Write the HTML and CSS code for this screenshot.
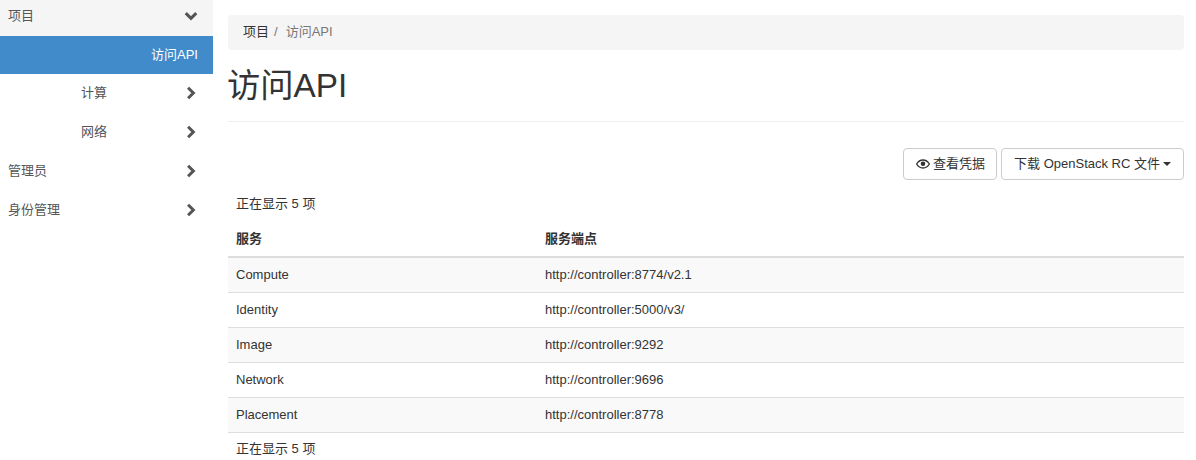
FILE: index.html
```html
<!DOCTYPE html>
<html lang="zh-CN">
<head>
    <meta charset="UTF-8">
    <title>访问API</title>
    <link rel="stylesheet" href="styles.css">
</head>
<body>
    <nav class="sidebar">
        <a class="nav-item nav-open">项目
            <svg class="chevron" viewBox="0 0 12 12"><path d="M1.5 3.5 6 8l4.500-4.500" /></svg>
        </a>
        <a class="nav-item nav-active">访问API</a>
        <a class="nav-item nav-sub">计算
            <svg class="chevron" viewBox="0 0 12 12"><path d="M3.500 1.500 8 6l-4.500 4.500" /></svg>
        </a>
        <a class="nav-item nav-sub">网络
            <svg class="chevron" viewBox="0 0 12 12"><path d="M3.500 1.500 8 6l-4.500 4.500" /></svg>
        </a>
        <a class="nav-item">管理员
            <svg class="chevron" viewBox="0 0 12 12"><path d="M3.500 1.500 8 6l-4.500 4.500" /></svg>
        </a>
        <a class="nav-item">身份管理
            <svg class="chevron" viewBox="0 0 12 12"><path d="M3.500 1.500 8 6l-4.500 4.500" /></svg>
        </a>
    </nav>

    <main class="content">
        <div class="breadcrumb">
            <span>项目</span>
            <span class="crumb-sep">/</span>
            <span class="crumb-current">访问API</span>
        </div>

        <div class="page-header">
            <h1>访问API</h1>
        </div>

        <div class="actions">
            <button class="btn btn-creds">
                <svg class="eye" viewBox="0 0 14 10">
                    <path d="M.6 5C2.200 2.400 4.400 1 7 1s4.800 1.400 6.400 4C11.800 7.600 9.600 9 7 9S2.200 7.600.6 5z" />
                    <circle cx="7" cy="4.800" r="2.300" />
                </svg>
                <span>查看凭据</span>
            </button>
            <button class="btn"><span>下载 OpenStack RC 文件</span><span class="caret"></span></button>
        </div>

        <div class="count">正在显示 5 项</div>

        <table class="api-table">
            <thead>
                <tr><th class="col-service">服务</th><th>服务端点</th></tr>
            </thead>
            <tbody>
                <tr><td>Compute</td><td>http://controller:8774/v2.1</td></tr>
                <tr><td>Identity</td><td>http://controller:5000/v3/</td></tr>
                <tr><td>Image</td><td>http://controller:9292</td></tr>
                <tr><td>Network</td><td>http://controller:9696</td></tr>
                <tr><td>Placement</td><td>http://controller:8778</td></tr>
            </tbody>
        </table>

        <div class="count count-bottom">正在显示 5 项</div>
    </main>
</body>
</html>
```

FILE: styles.css
```css
* {
    box-sizing: border-box;
}

body {
    font-family: "Liberation Sans", "Noto Sans CJK SC", sans-serif;
    font-size: 13px;
    line-height: 18px;
    color: #333;
    background: white;
    margin: 0;
    display: flex;
    height: 460px;
    overflow: hidden;
}

.sidebar {
    width: 213px;
    flex-shrink: 0;
}

.nav-item {
    display: flex;
    align-items: center;
    height: 39px;
    padding-left: 8px;
    padding-bottom: 2px;
    position: relative;
    color: #555;
}

.nav-open {
    height: 36px;
    background: #f5f5f5;
    padding-bottom: 5px;
}

.nav-active {
    height: 38px;
    justify-content: flex-end;
    padding-right: 15px;
    padding-bottom: 0;
    background: #428bca;
    color: white;
}

.nav-sub {
    padding-left: 81px;
}

.chevron {
    position: absolute;
    right: 15px;
    top: 12px;
    width: 14px;
    height: 14px;
    fill: none;
    stroke: #555;
    stroke-width: 2.600;
}

.nav-open .chevron {
    top: 9px;
}

.content {
    width: 983px;
    padding: 15px 12px 0 15px;
}

.breadcrumb {
    height: 35px;
    padding: 8px 15px;
    background: #f5f5f5;
    border-radius: 4px;
    display: flex;
}

.crumb-sep {
    color: #777;
    padding: 0 5px;
}

.crumb-current {
    color: #777;
    padding-left: 3px;
}

.page-header {
    margin-top: 16px;
    padding-bottom: 16px;
    border-bottom: 1px solid #eee;
}

h1 {
    font-size: 33.3px;
    font-weight: 400;
    line-height: 39px;
    margin: 0 0 0 -1px;
}

.actions {
    display: flex;
    justify-content: flex-end;
    gap: 4px;
    margin-top: 26px;
}

.btn {
    font: inherit;
    color: #333;
    background: white;
    border: 1px solid #ccc;
    border-radius: 4px;
    height: 32px;
    padding: 0 12px;
    display: flex;
    align-items: center;
}

.btn-creds {
    padding-right: 11px;
}

.eye {
    width: 14px;
    height: 10px;
    margin-right: 3px;
    fill: none;
    stroke: #333;
    stroke-width: 1.300;
}

.eye circle {
    fill: #333;
    stroke: none;
}

.caret {
    width: 0;
    height: 0;
    margin-left: 3px;
    border-top: 4px solid #333;
    border-left: 4px solid transparent;
    border-right: 4px solid transparent;
}

.count {
    padding: 15px 8px 0;
    height: 34px;
}

.count-bottom {
    padding-top: 7px;
}

.api-table {
    width: 100%;
    border-collapse: collapse;
}

.api-table th {
    text-align: left;
    vertical-align: bottom;
    height: 43px;
    padding: 8px;
    border-bottom: 2px solid #ddd;
}

.api-table .col-service {
    width: 309px;
}

.api-table td {
    height: 35px;
    padding: 8px;
    border-bottom: 1px solid #ddd;
}

.api-table tbody tr:nth-child(odd) {
    background: #f9f9f9;
}
```
